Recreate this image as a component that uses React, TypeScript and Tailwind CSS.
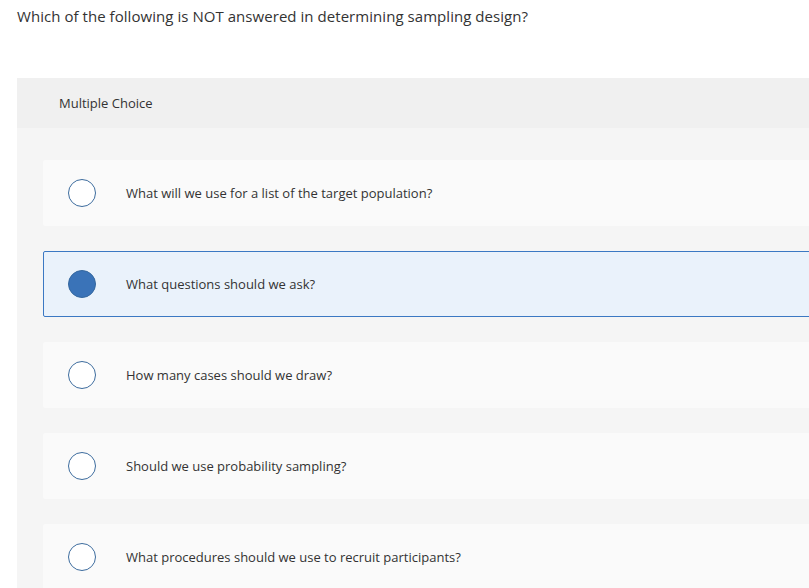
import React from "react";

const options = [
  "What will we use for a list of the target population?",
  "What questions should we ask?",
  "How many cases should we draw?",
  "Should we use probability sampling?",
  "What procedures should we use to recruit participants?",
];

export default function App() {
  return (
    <div
      className="w-[809px] h-[588px] overflow-hidden bg-white text-[#333]"
      style={{ fontFamily: '"Open Sans", "Liberation Sans", sans-serif' }}
    >
      <div className="pl-[17px] pt-[6px] h-[78px]">
        <p className="text-[15px] leading-[20px] text-[#333] tracking-[0.05px]">
          Which of the following is NOT answered in determining sampling design?
        </p>
      </div>
      <div className="ml-[17px] w-[1000px]">
        <div className="h-[50px] bg-[#f0f0f0] pl-[42px] pt-[2px] flex items-center">
          <span className="text-[13px] text-[#333]">Multiple Choice</span>
        </div>
        <div className="bg-[#f5f5f5] pt-[32px] pl-[26px] flex flex-col gap-[25px] pb-[40px]">
          {options.map((o, i) => {
            const selected = i === 1;
            return (
              <div
                key={i}
                className={
                  selected
                    ? "h-[66px] flex items-center bg-[#eaf2fb] border border-[#3b78c3] rounded-[2px] pl-[24px]"
                    : "h-[66px] flex items-center bg-[#fafafa] rounded-[2px] pl-[25px]"
                }
              >
                <div
                  className={
                    selected
                      ? "w-[28px] h-[28px] rounded-full bg-[#3a73b8] border border-[#35689f] shrink-0"
                      : "w-[28px] h-[28px] rounded-full bg-white border-[1.5px] border-[#3d6c9e] shrink-0"
                  }
                />
                <span className="ml-[30px] pt-[2px] text-[13px] text-[#333]">{o}</span>
              </div>
            );
          })}
        </div>
      </div>
    </div>
  );
}
